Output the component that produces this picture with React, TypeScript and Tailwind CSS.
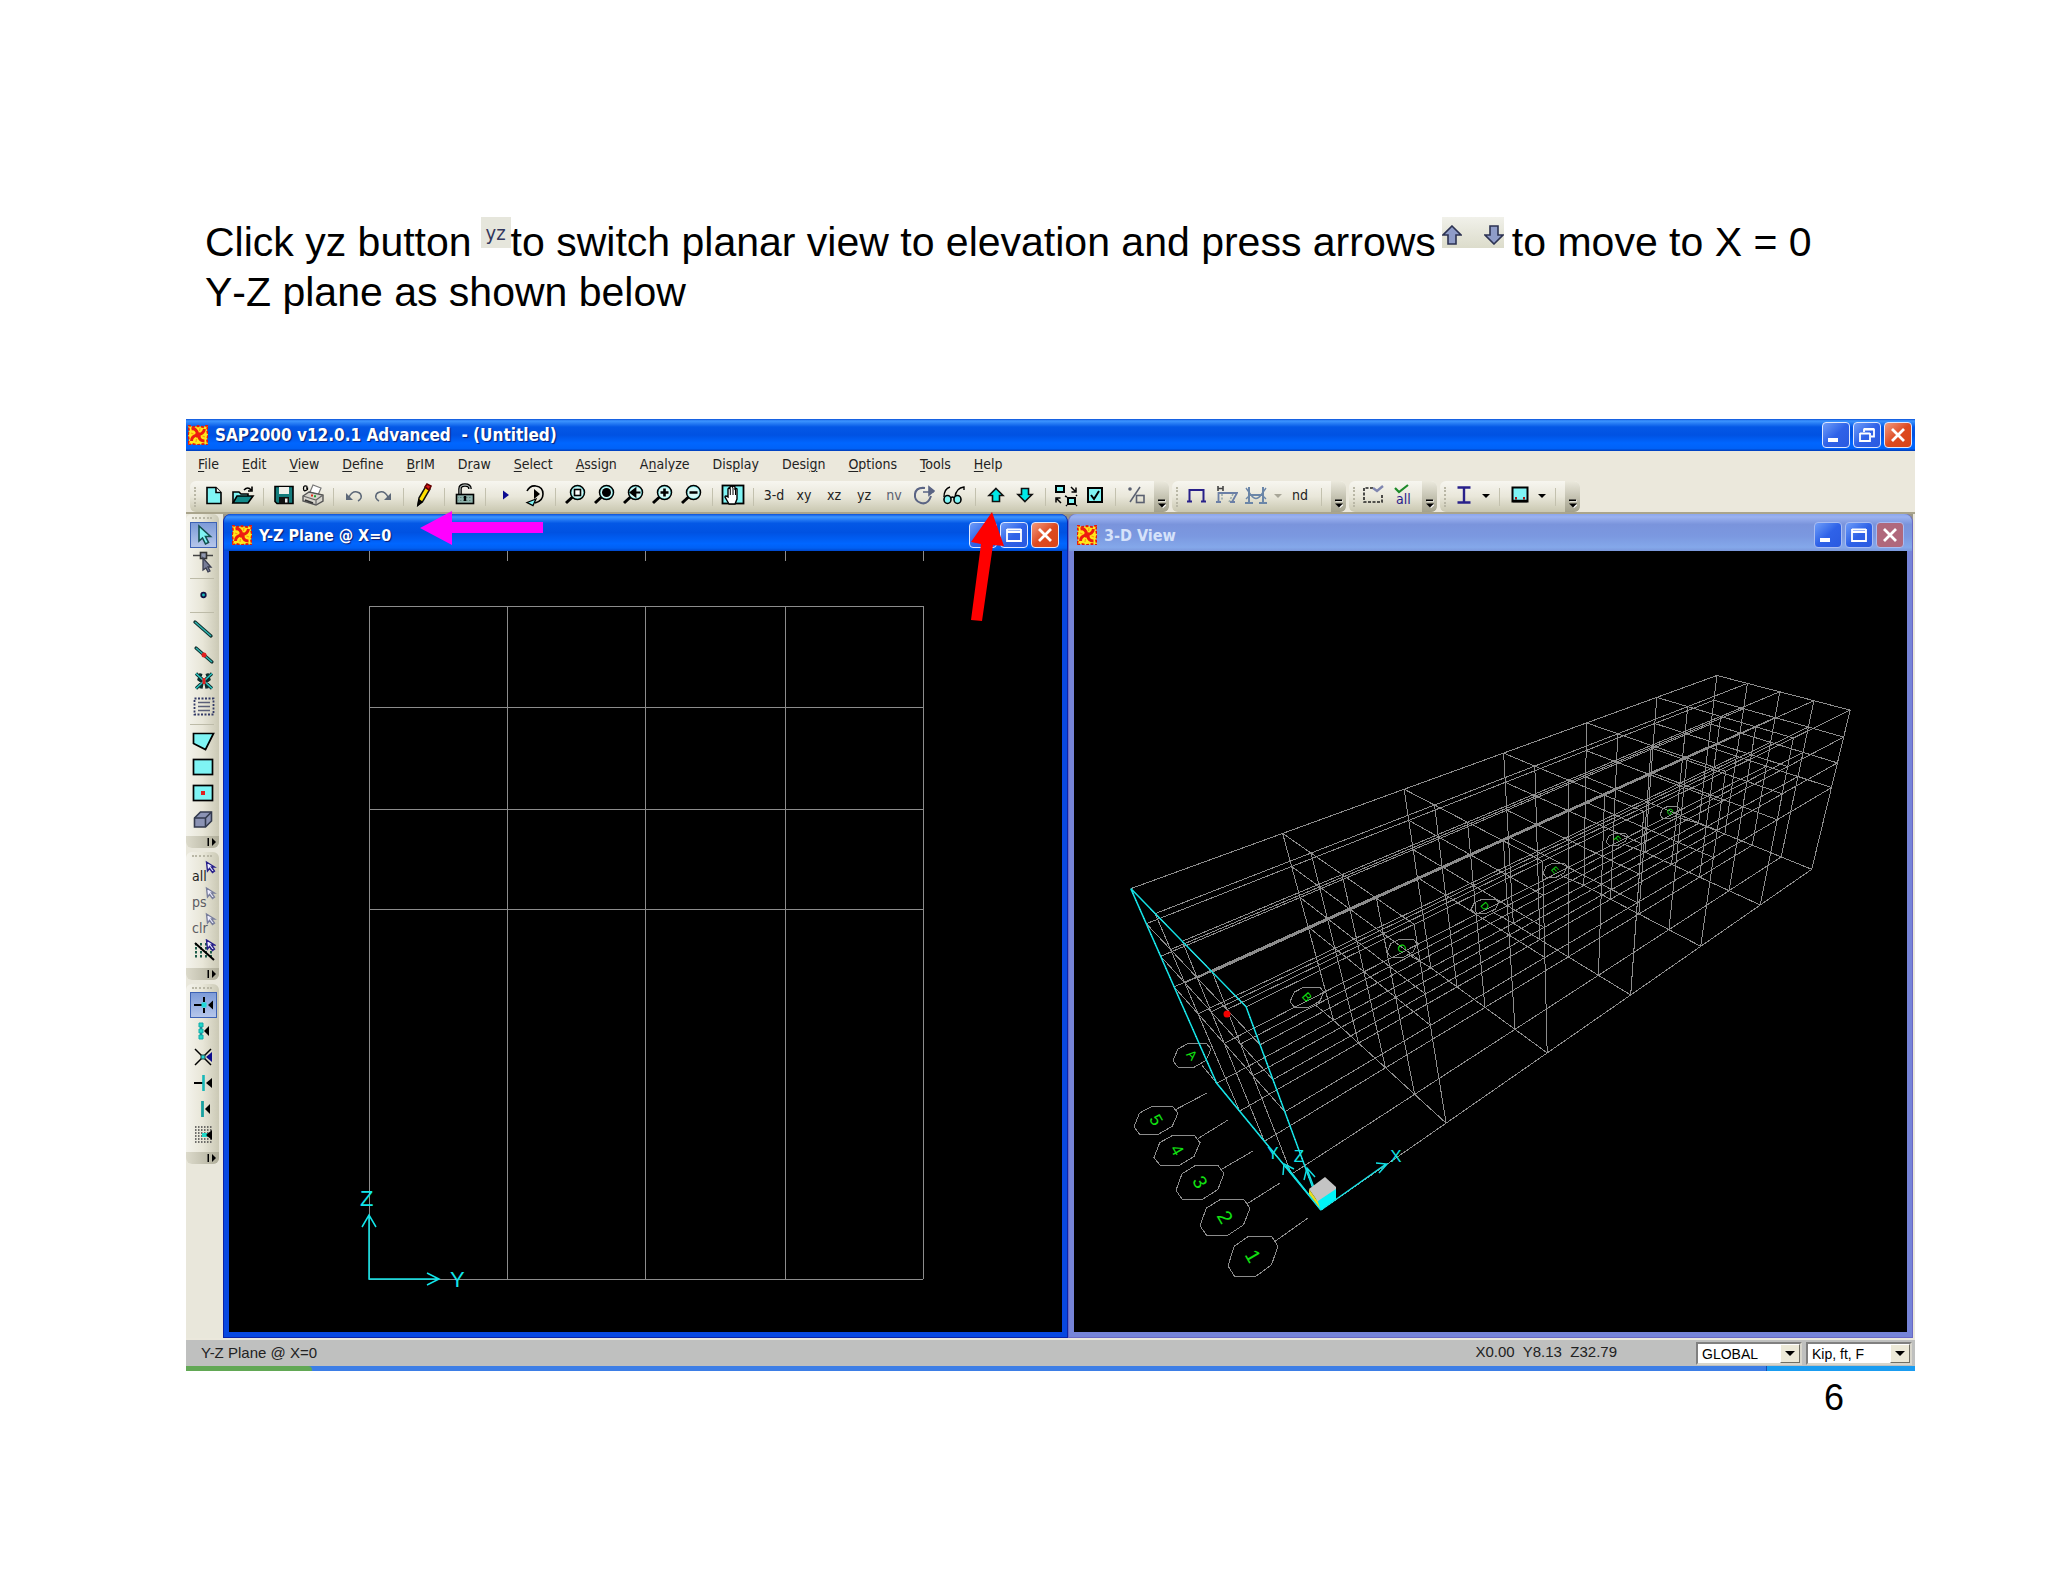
import type { ReactNode } from 'react';

const CYAN = '#7ff4f4';

// ---------- icons ----------

function Icon({ size = 'w-6 h-6', children }: { size?: string; children: ReactNode }) {
    return (
        <svg viewBox="0 0 24 24" className={`${size} shrink-0`} fill="none" stroke="#000" strokeWidth="1.6" aria-hidden="true">
            {children}
        </svg>
    );
}

function SapLogo() {
    return (
        <svg viewBox="0 0 20 20" className="w-5 h-5 shrink-0" aria-hidden="true">
            <path d="M0 0l5 2 5-1 5 1 5-2-1 5 1 5-1 5 1 5-5-1-5 1-5-1-5 1 1-5-1-5 1-5z" fill="#ffe81a" stroke="#e8180c" strokeWidth="1.800" strokeDasharray="3 1.500" />
            <path d="M3.500 4q5-1 6 5M16.500 4q-1 5-6 5.500M3.500 16q0-5 6-6M16.500 16q-5 0-6-5.500" fill="none" stroke="#ee1c10" strokeWidth="3" />
            <path d="M8 8l4 4M12 8l-4 4" stroke="#ee1c10" strokeWidth="2.800" />
            <path d="M3 8l2.500 1M8 17l.5-3M12 3l-.5 3M17 12l-2.500-1" stroke="#ff9a10" strokeWidth="1.200" />
        </svg>
    );
}

const NewFile = () => (
    <Icon>
        <path d="M5 4.500h9l5 5v11H5z" fill={CYAN} />
        <path d="M14 4.500v5h5" fill="#fff" />
    </Icon>
);

const OpenFile = () => (
    <Icon>
        <path d="M2 20V9h6l2 2h7v3" fill={CYAN} />
        <path d="M2 20l4-7h16l-5 7z" fill="#128a8a" />
        <path d="M13 7q4-4 7 0M21 3.500V8h-4" />
    </Icon>
);

const Save = () => (
    <Icon>
        <path d="M3 3.500h18v17H5l-2-2z" fill="#147c7c" />
        <rect x="7" y="4" width="10" height="7" fill="#f0f0ea" stroke="none" />
        <rect x="7" y="14" width="10" height="6.500" fill="#111" stroke="none" />
        <rect x="13" y="15.500" width="2.500" height="4" fill="#eee" stroke="none" />
    </Icon>
);

const Printer = () => (
    <Icon>
        <path d="M6.500 3.500q-4-2-4 2t4 1V5H5" strokeWidth="1.300" />
        <path d="M9 9l3-7 8 3-3 7z" fill="#fff" stroke="#777" strokeWidth="1.200" />
        <path d="M2 13l6-4 14 3v6l-7 4-13-4z" fill="#d6d4cc" stroke="#555" strokeWidth="1.400" />
        <path d="M2 13l13 4 7-5M15 17v5" stroke="#666" strokeWidth="1.200" />
        <path d="M4 17l8 3" stroke="#333" />
        <path d="M10 12.500h2" stroke="#e03020" strokeWidth="2" />
        <path d="M13 13.300h2" stroke="#20a030" strokeWidth="2" />
    </Icon>
);

const Undo = () => (
    <Icon>
        <path d="M7 14q3-6 8-5t4 6q-1 2-3 3" stroke="#5d6878" strokeWidth="1.500" />
        <path d="M4 10v7h7z" fill="#5d6878" stroke="none" />
    </Icon>
);

const Redo = () => (
    <Icon>
        <path d="M17 14q-3-6-8-5t-4 6q1 2 3 3" stroke="#5d6878" strokeWidth="1.500" />
        <path d="M20 10v7h-7z" fill="#5d6878" stroke="none" />
    </Icon>
);

const Pencil = () => (
    <Icon>
        <path d="M7 15L14 3l4 3-7 12-5 4z" fill="#ffe000" stroke="#111" strokeWidth="1.500" />
        <path d="M13 4l2-3 4 2-2 4z" fill="#e01818" stroke="#600" />
        <path d="M6 22l1-5 3 2z" fill="#111" />
    </Icon>
);

const Unlock = () => (
    <Icon>
        <path d="M7 11V6q0-4 5-4t5 4" strokeWidth="3.600" />
        <path d="M7 11V6q0-4 5-4t5 4" stroke="#dfe8e4" strokeWidth="1" />
        <rect x="3.500" y="11.500" width="17" height="9" fill="#8fb3ac" />
        <path d="M4 14.500h16M4 17.500h16" stroke="#5e807a" strokeDasharray="1.500 1.500" strokeWidth="1" />
        <path d="M12 13v5" strokeWidth="2.400" />
    </Icon>
);

const Play = () => (
    <Icon>
        <path d="M9 7.500v9l6-4.500z" fill="#0a0a90" stroke="none" />
    </Icon>
);

const RunAnimate = () => (
    <Icon>
        <path d="M4 8q3-6 9-5 7 1 7 8t-8 9" />
        <path d="M11 6v10l6-5z" fill="#000" stroke="none" />
        <path d="M13 16l-9 3.500 6 3z" fill={CYAN} strokeWidth="1.300" />
    </Icon>
);

function Magnifier({ children }: { children?: ReactNode }) {
    return (
        <Icon>
            <path d="M8.500 14l-6.500 6" strokeWidth="3" />
            <circle cx="13.500" cy="9.500" r="7" fill={CYAN} strokeWidth="1.500" />
            <circle cx="13.500" cy="9.500" r="5.600" fill="#d9f7f5" stroke="none" />
            {children}
        </Icon>
    );
}

const Hand = () => (
    <Icon>
        <rect x="1.500" y="2.500" width="21" height="18" fill={CYAN} strokeWidth="1.800" />
        <path d="M8 21l-4-7q0-2 3 0V6q1-2 2 0V4q1.500-2 2.500 0V4q1.500-2 2.500 0v2q1.500-1 2 0v10l-2 5z" fill="#fff" strokeWidth="1.400" />
        <path d="M9.300 6v6M12 5v7M14.500 6v6" strokeWidth="1" />
    </Icon>
);

const RotateView = () => (
    <Icon>
        <path d="M13 5q-9-1-10 6t6 9 10-7" stroke="#5a6484" strokeWidth="2" />
        <path d="M11 9h11M17 4v8l5-4z" fill="#5a6484" stroke="#5a6484" />
    </Icon>
);

const Glasses = () => (
    <Icon>
        <path d="M2 14q0-8 6-10M13 14q1-9 9-10v3" strokeWidth="1.400" />
        <ellipse cx="5.500" cy="16.500" rx="3.500" ry="4" fill={CYAN} />
        <ellipse cx="15.500" cy="16.500" rx="3.500" ry="4" fill={CYAN} />
        <path d="M9 15q1.500-2 3 0" />
    </Icon>
);

const ArrowUp = () => (
    <Icon>
        <path d="M12 5.500l7 7h-3.500v6h-7v-6H5z" fill="#00e8e8" stroke="#111" />
    </Icon>
);

const ArrowDown = () => (
    <Icon>
        <path d="M12 18.500l7-7h-3.500v-6h-7v6H5z" fill="#00e8e8" stroke="#111" />
    </Icon>
);

const ShrinkObjects = () => (
    <Icon>
        <rect x="2" y="3" width="8" height="6" fill={CYAN} strokeWidth="2" />
        <rect x="14" y="15" width="7" height="6" fill={CYAN} strokeWidth="2" />
        <path d="M17 4l4 4M22 4.500V9h-4.500M7 20l-4-4M2 19.500V15h4.500M11 13l2 1M22 13l1-1M12 23l1-1M22 22l1 1" strokeWidth="1.500" />
    </Icon>
);

const CheckOption = () => (
    <Icon>
        <rect x="5" y="5" width="14" height="14" fill={CYAN} strokeWidth="2" />
        <path d="M8 12l3 4 5-8" strokeWidth="2" />
    </Icon>
);

const AssignSlash = () => (
    <Icon>
        <path d="M6 19L16 4" stroke="#5a6070" strokeWidth="1.500" />
        <circle cx="6" cy="6" r="1.800" fill="#5a6070" stroke="none" />
        <rect x="12.500" y="12.500" width="7.500" height="7" stroke="#5a6070" />
    </Icon>
);

const Frame = () => (
    <Icon>
        <path d="M5.500 18.500V7h14v11.500M3 18.500h5M17 18.500h5" stroke="#28208a" strokeWidth="2" />
    </Icon>
);

const FrameDim = () => (
    <Icon>
        <path d="M4 3v5M9 3v5M4 5.500h5" stroke="#444" />
        <path d="M4.500 19V10H23L18 19M2 19h5M16 19h5" stroke="#6b7fa6" strokeWidth="1.800" />
        <path d="M8 11v7M19 11l-4 8" stroke="#9aa" strokeDasharray="2 1.500" />
    </Icon>
);

const FrameMoment = () => (
    <Icon>
        <path d="M5 20V4M19 20V4M4 12h16M1 20h8M15 20h8" stroke="#6b86a8" strokeWidth="2" />
        <path d="M2 5l5 7q5 7 10 0l5-7M2 16l5-5M22 16l-5-5" stroke="#6b86a8" strokeWidth="1.400" />
    </Icon>
);

const SelectDashed = () => (
    <Icon>
        <path d="M12 5H3v14h18V11" stroke="#222" strokeDasharray="3 1.500" strokeWidth="1.600" />
        <path d="M12 5l4 3 6-5" stroke="#7f86b0" strokeWidth="2.400" />
    </Icon>
);

const Section = () => (
    <Icon>
        <path d="M5.500 4.500h13M5.500 19.500h13M12 4.500v15" stroke="#28208a" strokeWidth="2.400" />
    </Icon>
);

const Slab = () => (
    <Icon>
        <rect x="4.500" y="4.500" width="15" height="14" fill={CYAN} strokeWidth="2" />
        <path d="M8 14v2.500M16 14v2.500" stroke="#a01818" strokeWidth="2" />
        <path d="M5 18h14" strokeWidth="2.500" />
    </Icon>
);

function Caret({ dim }: { dim?: boolean }) {
    return (
        <button aria-label="More" className="w-[14px] h-full pb-[2px] flex items-center justify-center">
            <svg viewBox="0 0 8 4" className="w-2 h-1">
                <path d="M0 0h8L4 4z" fill={dim ? '#a8a698' : '#000'} />
            </svg>
        </button>
    );
}

// ---------- toolbar ----------

function Tool({ label, wide, dim, children }: { label: string; wide?: boolean; dim?: boolean; children: ReactNode }) {
    return (
        <button
            aria-label={label}
            className={`${wide ? 'w-[30px]' : 'w-[29px]'} ${dim ? 'text-[#5b6070]' : 'text-[#222]'} h-full pb-[3px] flex items-center justify-center text-[14px] leading-5`}
        >
            {children}
        </button>
    );
}

const Sep = () => (
    <div className="w-3 flex justify-center items-center">
        <div className="w-px h-[18px] bg-[#c3c1ae]" />
    </div>
);

function ToolGroup({ name, children }: { name: string; children: ReactNode }) {
    return (
        <div role="toolbar" aria-label={name} className="flex h-[31px] rounded-md overflow-hidden bg-gradient-to-b from-[#f7f6f0] via-[#e9e7da] to-[#c9c7b0]">
            <div className="w-[9px] flex items-center justify-center">
                <div className="h-5 border-l-2 border-dotted border-[#b9b7a6]" />
            </div>
            {children}
            <button aria-label="Toolbar options" className="w-[15px] ml-1 flex items-end justify-center pb-1 bg-gradient-to-b from-[#ebe9dd] to-[#a3a18c]">
                <svg viewBox="0 0 8 9" className="w-2 h-[9px]">
                    <path d="M1 1.500h7v1H1zM1 5.500h8L5 9z" fill="#fff" />
                    <path d="M0 0.500h7v1.500H0zM0 4.500h8L4 8.500z" fill="#000" />
                </svg>
            </button>
        </div>
    );
}

// ---------- side dock ----------

function DockButton({ label, active, children }: { label: string; active?: boolean; children: ReactNode }) {
    return (
        <button
            aria-label={label}
            className={`w-[27px] h-[26px] flex items-center justify-center border ${active ? 'border-[#3d62b4] bg-gradient-to-b from-[#7d9bd8] to-[#b5c6ea]' : 'border-transparent'}`}
        >
            {children}
        </button>
    );
}

const DockSep = () => <div className="h-2 w-6 flex items-center"><div className="h-px w-full bg-[#bdbba8]" /></div>;

function DockGroup({ name, children }: { name: string; children: ReactNode }) {
    return (
        <div role="toolbar" aria-label={name} aria-orientation="vertical" className="mb-1 rounded-md overflow-hidden bg-gradient-to-r from-[#f4f3ec] via-[#e8e6d8] to-[#cbc9b5]">
            <div className="h-2 flex items-center pl-[6px]">
                <div className="w-5 border-t-2 border-dotted border-[#b9b7a6]" />
            </div>
            <div className="pl-1 flex flex-col items-start">{children}</div>
            <button aria-label="Toolbar options" className="mt-1 h-3 w-full flex items-center justify-end pr-[2px] bg-gradient-to-r from-[#dcdacb] to-[#b0ae9a]">
                <svg viewBox="0 0 10 8" className="w-[10px] h-2">
                    <path d="M0.500 0H2v8H0.500zM5 0v8l4-4z" fill="#000" />
                </svg>
            </button>
        </div>
    );
}

const SelectArrow = ({ color = '#28208a' }: { color?: string }) => (
    <path d="M14.500 1l1 9 2-2.500 3 4 2-1.500-3-4h3z" fill="#eef" stroke={color} strokeWidth="1.400" />
);

function SelectText({ text, color, arrow }: { text: string; color: string; arrow: string }) {
    return (
        <svg viewBox="0 0 24 24" className="w-6 h-6 overflow-visible">
            <text x="0" y="20" fontSize="14" fill={color}>{text}</text>
            <g fill="none"><SelectArrow color={arrow} /></g>
        </svg>
    );
}

const SideDock = () => (
    <div className="w-[37px] shrink-0 bg-[#e9e7db] pr-1">
        <DockGroup name="Draw">
            <DockButton label="Set select mode" active>
                <Icon><path d="M7 3v15l3.500-3 3 6 3-1.500-3-6h5z" fill={CYAN} stroke="#14504f" /></Icon>
            </DockButton>
            <DockButton label="Reshape">
                <Icon><path d="M1 6.500h20" stroke="#444" /><rect x="8.500" y="3.500" width="6" height="6" fill="#9098b0" stroke="#333" /><path d="M11 9v12l3-2 2 4 2-1-2-4h3z" fill="#777d98" stroke="#3a3e50" strokeWidth="1.300" /></Icon>
            </DockButton>
            <DockSep />
            <DockButton label="Draw joint">
                <Icon><circle cx="11.500" cy="12" r="2.300" fill="#18b8b8" stroke="#114" strokeWidth="1.700" /></Icon>
            </DockButton>
            <DockSep />
            <DockButton label="Draw frame">
                <Icon><path d="M3 5l16 14" strokeWidth="3.400" stroke="#12302f" strokeLinecap="round" /><path d="M3 5l16 14" strokeWidth="1.400" stroke="#2bb5b0" /></Icon>
            </DockButton>
            <DockButton label="Quick draw frame">
                <Icon><path d="M4 5l16 14" strokeWidth="3.200" stroke="#12302f" strokeLinecap="round" /><path d="M4 5l16 14" strokeWidth="1.400" stroke="#2bb5b0" /><circle cx="12" cy="12" r="2.500" fill="#e02020" stroke="none" /></Icon>
            </DockButton>
            <DockButton label="Quick draw braces">
                <Icon><path d="M4 4.500l16 15M20 4.500l-16 15M9 4.500l-2 6 4 3M15 4.500l2 6-4 3M9 19.500l1-5M15 19.500l-1-5" strokeWidth="3.200" stroke="#0f2c2b" /><path d="M4 4.500l16 15M20 4.500l-16 15" stroke="#2bc5c0" strokeWidth="1.600" /><path d="M12 9v6" stroke="#e02020" strokeWidth="3" /></Icon>
            </DockButton>
            <DockButton label="Quick draw secondary beams">
                <Icon><rect x="2.500" y="3.500" width="19" height="16" stroke="#333a66" strokeDasharray="2 1.500" strokeWidth="1.800" /><path d="M6 7.500h12M6 11.500h12M6 15.500h12" stroke="#5a5f78" /></Icon>
            </DockButton>
            <DockSep />
            <DockButton label="Draw poly area">
                <Icon><path d="M1.500 4.500h20l-8 16-12-6z" fill={CYAN} strokeWidth="1.700" /></Icon>
            </DockButton>
            <DockButton label="Draw rectangular area">
                <Icon><rect x="1.500" y="4.500" width="19" height="15" fill={CYAN} strokeWidth="1.700" /></Icon>
            </DockButton>
            <DockButton label="Quick draw area">
                <Icon><rect x="1.500" y="4.500" width="19" height="15" fill={CYAN} strokeWidth="1.700" /><rect x="9" y="10" width="4" height="4" fill="#e02020" stroke="none" /></Icon>
            </DockButton>
            <DockButton label="Draw solid">
                <Icon><path d="M2.500 11l6-6h11v9l-6 6h-11z" fill="#8b93b4" stroke="#333a4e" /><path d="M2.500 11h11v9M13.500 11l6-6" stroke="#333a4e" /></Icon>
            </DockButton>
        </DockGroup>
        <DockGroup name="Select">
            <DockButton label="Select all"><SelectText text="all" color="#222" arrow="#28208a" /></DockButton>
            <DockButton label="Restore previous selection"><SelectText text="ps" color="#5c5c62" arrow="#7a7f9c" /></DockButton>
            <DockButton label="Clear selection"><SelectText text="clr" color="#5c5c62" arrow="#7a7f9c" /></DockButton>
            <DockButton label="Select using intersecting line">
                <Icon><path d="M4 4v16M9 4v16M14 4v16M19 4v16" stroke="#1d5c4a" strokeDasharray="2.500 1.500" strokeWidth="2" /><path d="M3 4l19 17" strokeWidth="2" /><SelectArrow /></Icon>
            </DockButton>
        </DockGroup>
        <DockGroup name="Snap">
            <DockButton label="Snap to points" active>
                <Icon><path d="M2 12h8M12 4v5M12 15v5" strokeWidth="2" /><rect x="9.500" y="9.500" width="5" height="5" fill="#20d8d8" stroke="none" /><path d="M21 7.500v9L16 12z" fill="#000" stroke="none" /></Icon>
            </DockButton>
            <DockButton label="Snap to ends and midpoints">
                <Icon><path d="M9 4v16" stroke="#147" /><path d="M7 4h4v4H7zM7 10h4v4H7zM7 16h4v4H7z" fill="#20d8c8" stroke="#1aa" strokeWidth="1" /><path d="M17 7v10l-5-5z" fill="#000" stroke="none" /></Icon>
            </DockButton>
            <DockButton label="Snap to intersections">
                <Icon><path d="M3 4l16 16M19 4L3 20" strokeWidth="1.500" /><rect x="9" y="10" width="4" height="4" fill="#20d8d8" stroke="#244" strokeWidth="1" /><path d="M20 7v10l-6-5z" fill="#0c0c8c" stroke="none" /></Icon>
            </DockButton>
            <DockButton label="Snap to perpendicular">
                <Icon><path d="M2 12h9" strokeWidth="2" /><path d="M11.500 4v16" stroke="#18b8b8" strokeWidth="2.600" /><path d="M20 7v10l-6-5z" fill="#000" stroke="none" /></Icon>
            </DockButton>
            <DockButton label="Snap to lines and edges">
                <Icon><path d="M10.500 4v16" stroke="#18a0a0" strokeWidth="2.800" /><path d="M18 7v10l-5-5z" fill="#000" stroke="none" /></Icon>
            </DockButton>
            <DockButton label="Snap to fine grid">
                <Icon><path d="M3 4h18M3 7h18M3 10h18M3 13h18M3 16h18M3 19h18" stroke="#444" strokeDasharray="1.500 1.500" strokeWidth="1.500" /><rect x="10" y="10" width="5" height="4" fill="#20d8c8" stroke="none" /><path d="M20 7v10l-6-5z" fill="#000" stroke="none" /></Icon>
            </DockButton>
        </DockGroup>
    </div>
);

// ---------- title bar buttons ----------

function CaptionButton({ kind, inactive }: { kind: 'min' | 'max' | 'restore' | 'close'; inactive?: boolean }) {
    const blue = 'bg-gradient-to-br from-[#6f9cf8] via-[#2f62e8] to-[#2a5ae0]';
    const red = inactive ? 'bg-[#b0687c]' : 'bg-gradient-to-br from-[#f0987c] via-[#dd4a20] to-[#d84418]';
    return (
        <button
            aria-label={kind}
            className={`w-7 h-[26px] rounded border ${inactive ? 'border-[#a9bdf2]' : 'border-[#dfe8ff]'} ${kind === 'close' ? red : blue}`}
        >
            <svg viewBox="0 0 26 24" className="w-full h-full" fill="none" stroke="#fff">
                {kind === 'min' && <path d="M5 17h10" strokeWidth="4" />}
                {kind === 'max' && <path d="M6 6.500h14M6 6v12h14V6M6 9h14" strokeWidth="1.800" />}
                {kind === 'restore' && <path d="M6 10.500h10M6 10v8h10v-8M10 9V6.500h10v7h-3M10 6h10" strokeWidth="1.800" />}
                {kind === 'close' && <path d="M7 6l12 12M19 6L7 18" strokeWidth="2.800" />}
            </svg>
        </button>
    );
}

function ViewWindow({ title, inactive, children }: { title: string; inactive?: boolean; children: ReactNode }) {
    return (
        <section
            aria-label={title}
            className={`relative flex-1 min-w-0 rounded-t-lg px-[5px] pb-[5px] border-b border-x ${inactive ? 'bg-[#7684d8] border-[#6a68c4]' : 'bg-[#0848e0] border-[#0a22a8]'}`}
        >
            <div
                className={`-mx-[5px] h-[37px] pt-1 pl-[8px] pr-2 rounded-t-lg flex items-center ${inactive
                    ? 'bg-[linear-gradient(#8ba6ee,#9bb2f0_8%,#7a94dc_28%,#7b98e0_60%,#84a8ea_90%,#7b98dc)] text-[#d6e2fa]'
                    : 'bg-[linear-gradient(#0a50d8,#3d95ff_8%,#0458e6_25%,#0052e2_50%,#0066ff_80%,#0060f4_92%,#0048cc)] text-white [text-shadow:1px_1px_1px_#0a1a70]'}`}
            >
                <SapLogo />
                <h2 className="ml-[7px] pt-[2px] flex-1 text-[16px] leading-5 font-bold whitespace-pre">{title}</h2>
                <div className="flex gap-[3px]">
                    <CaptionButton kind="min" inactive={inactive} />
                    <CaptionButton kind="max" inactive={inactive} />
                    <CaptionButton kind="close" inactive={inactive} />
                </div>
            </div>
            {children}
        </section>
    );
}

// ---------- drawings ----------

const GRID_Y = [140, 278, 416, 556, 694];
const GRID_Z = [55, 156, 258, 358, 728];

function PlaneView() {
    return (
        <svg viewBox="0 0 833 781" className="block w-full bg-black" role="img" aria-label="Y-Z grid">
            <g stroke="#8c8c8c" shapeRendering="crispEdges">
                {GRID_Y.map(x => <path key={x} d={`M${x} 0V10M${x} 55V728`} />)}
                {GRID_Z.map(y => <path key={y} d={`M140 ${y}H694`} />)}
            </g>
            <g stroke="#12e6ea" strokeWidth="1.500" fill="none">
                <path d="M140 665V728H210M133 676l7-12 7 12M198 722l12 6-12 6" />
            </g>
            <g fill="#12e6ea" fontSize="22" className="font-['Liberation_Sans',Arial,sans-serif]">
                <text x="131" y="655">Z</text>
                <text x="221" y="736">Y</text>
            </g>
        </svg>
    );
}

const XS = [0, 1 / 6, 2 / 6, 3 / 6, 4 / 6, 5 / 6, 1];
const YS = [0, 0.25, 0.5, 0.75, 1];
const ZS = [0, 0.55, 0.7, 0.85, 1];

// perspective projection of the unit box onto the 3-D view
function project(x: number, y: number, z: number) {
    const w = 1 + 0.711 * x + 0.185 * y - 0.233 * z;
    const u = (247 + 1015.2 * x - 77.9 * y - 115 * z) / w;
    const v = (659 - 114.4 * x - 28.2 * y - 309.4 * z) / w;
    return `${u.toFixed(1)} ${v.toFixed(1)}`;
}

function latticePath() {
    let d = '';
    for (const y of YS) for (const z of ZS) d += `M${project(0, y, z)}L${project(1, y, z)}`;
    for (const x of XS) for (const z of ZS) d += `M${project(x, 0, z)}L${project(x, 1, z)}`;
    for (const x of XS) for (const y of YS) d += `M${project(x, y, 0)}L${project(x, y, 1)}`;
    return d;
}

const BUBBLES = [
    { t: '1', cx: 179, cy: 705, rx: 25, ry: 20, size: 20, to: [234, 667] },
    { t: '2', cx: 151, cy: 666, rx: 25, ry: 18, size: 20, to: [206, 632] },
    { t: '3', cx: 126, cy: 631, rx: 24, ry: 17, size: 19, to: [179, 600] },
    { t: '4', cx: 103, cy: 599, rx: 23, ry: 15, size: 17, to: [154, 569] },
    { t: '5', cx: 82, cy: 569, rx: 22, ry: 14, size: 17, to: [133, 542] },
];

const LETTERS = [
    { t: 'A', cx: 118, cy: 504, rx: 19, ry: 12, size: 13 },
    { t: 'B', cx: 233, cy: 446, rx: 17, ry: 10, size: 12 },
    { t: 'C', cx: 328, cy: 397, rx: 15, ry: 9, size: 11 },
    { t: 'D', cx: 411, cy: 355, rx: 14, ry: 7, size: 10 },
    { t: 'E', cx: 481, cy: 319, rx: 12, ry: 7, size: 9 },
    { t: 'F', cx: 543, cy: 288, rx: 11, ry: 6, size: 9 },
    { t: 'G', cx: 596, cy: 261, rx: 10, ry: 6, size: 8 },
];

const OCTAGON = [[-0.16, -1], [0.74, -1], [1, -0.49], [0.74, 0.44], [0.13, 1], [-0.75, 1], [-1, 0.49], [-0.75, -0.49]];

function octagon(cx: number, cy: number, rx: number, ry: number) {
    return OCTAGON.map(([x, y]) => `${(cx + x * rx).toFixed(1)},${(cy + y * ry).toFixed(1)}`).join(' ');
}

function SpaceView() {
    return (
        <svg viewBox="0 0 833 781" className="block w-full bg-black" role="img" aria-label="3-D grid">
            <g stroke="#8c8c8c" fill="none" shapeRendering="crispEdges">
                <path d={latticePath()} />
                {BUBBLES.map(b => (
                    <g key={b.t}>
                        <polygon points={octagon(b.cx, b.cy, b.rx, b.ry)} />
                        <path d={`M${b.cx + b.rx * 0.9} ${b.cy - b.ry * 0.75}L${b.to[0]} ${b.to[1]}`} />
                    </g>
                ))}
                {LETTERS.map((b, i) => (
                    <g key={b.t}>
                        <polygon points={octagon(b.cx, b.cy, b.rx, b.ry)} />
                        <path d={`M${b.cx + b.rx * 0.5} ${b.cy + b.ry * 0.8}L${project(i / 6, 1, 0)}`} />
                    </g>
                ))}
            </g>
            <g fill="#12e012" textAnchor="middle" className="font-['Liberation_Sans',Arial,sans-serif]">
                {BUBBLES.map(b => (
                    <text key={b.t} x={b.cx} y={b.cy} fontSize={b.size} dominantBaseline="central" transform={`rotate(60 ${b.cx} ${b.cy})`}>{b.t}</text>
                ))}
                {LETTERS.map(b => (
                    <text key={b.t} x={b.cx} y={b.cy} fontSize={b.size} dominantBaseline="central" transform={`rotate(48 ${b.cx} ${b.cy})`}>{b.t}</text>
                ))}
            </g>
            <g stroke="#12e0e4" fill="none" strokeWidth="1.500">
                <path d={`M${project(0, 0, 0)}L${project(0, 1, 0)}L${project(0, 1, 1)}L${project(0, 0, 1)}Z`} />
                <path d="M247 659L312 613M302 612l11 1-8 9" />
                <path d="M247 659L212 615M209 624l1-11 10 5M242 642L233 618M230 629l3-12 8 9" />
            </g>
            <g fill="#12e0e4" fontSize="17" textAnchor="middle" className="font-['Liberation_Sans',Arial,sans-serif]">
                <text x="322" y="611">X</text>
                <text x="199" y="608">Y</text>
                <text x="225" y="611">Z</text>
            </g>
            <path d="M235 638l16-12 11 10v3l-18 12z" fill="#c4c4c4" />
            <path d="M244 650l18-12v10l-15 11z" fill="#00f4f8" />
            <path d="M235 638l9 13 2 6-11-14z" fill="#e8e020" />
            <circle cx="153" cy="463" r="3.500" fill="#f40000" />
        </svg>
    );
}

// ---------- page ----------

// the number is the position of the underlined letter
const MENU: [string, number][] = [
    ['File', 0], ['Edit', 0], ['View', 0], ['Define', 0], ['BrIM', 0], ['Draw', 1], ['Select', 0],
    ['Assign', 0], ['Analyze', 1], ['Display', 3], ['Design', 4], ['Options', 0], ['Tools', 0], ['Help', 0],
];

function StatusSelect({ label, value, options }: { label: string; value: string; options: string[] }) {
    return (
        <div className="relative w-[106px] h-[23px]">
            <select
                aria-label={label}
                defaultValue={value}
                className="appearance-none w-full h-full pl-1 bg-white text-black text-[14px] leading-[18px] border-2 border-[#808080] border-r-[#d8d6cc] border-b-[#d8d6cc]"
            >
                {options.map(o => <option key={o}>{o}</option>)}
            </select>
            <span className="absolute right-[2px] inset-y-[2px] w-5 pointer-events-none flex items-center justify-center bg-[#ece9d8] border border-[#fff] border-r-[#716f64] border-b-[#716f64]">
                <svg viewBox="0 0 10 5" className="w-[10px] h-[5px]"><path d="M0 0h10L5 5z" /></svg>
            </span>
        </div>
    );
}

export default function App() {
    return (
        <main className="min-h-screen bg-white text-black font-['Liberation_Sans',Arial,sans-serif] pt-[217px] pb-16">
            <p className="pl-[205px] pr-16 text-[41px] leading-[50px] [font-kerning:none]">
                Click yz button
                <span className="inline-flex align-top items-center justify-center w-[30px] h-[31px] ml-[9px] bg-[#e6e6dc] text-[20px] leading-5 text-[#33375c] font-['DejaVu_Sans_Condensed','DejaVu_Sans',sans-serif]">yz</span>
                to switch planar view to elevation and press arrows
                <span className="inline-flex align-top items-center justify-between w-[62px] h-[31px] ml-[6px] mr-2 pt-1 bg-gradient-to-b from-[#f1f1ea] to-[#dcdccb]">
                    <svg viewBox="0 0 20 20" className="w-5 h-5" fill="#8f9cc8" stroke="#2c3252" strokeWidth="1.600" aria-hidden="true">
                        <path d="M10 1l9 9h-5v9H6v-9H1z" />
                    </svg>
                    <svg viewBox="0 0 20 20" className="w-5 h-5" fill="#8f9cc8" stroke="#2c3252" strokeWidth="1.600" aria-hidden="true">
                        <path d="M10 19l9-9h-5V1H6v9H1z" />
                    </svg>
                </span>
                to move to X = 0
                <br />
                Y-Z plane as shown below
            </p>

            <div className="mt-[102px] ml-[186px] mr-[133px] bg-[#ebe8dc] font-['DejaVu_Sans_Condensed','DejaVu_Sans',sans-serif]">
                <header className="h-8 pl-[2px] pr-[3px] flex items-center text-white bg-[linear-gradient(#0a50d8,#3d95ff_6%,#0458e6_25%,#0052e2_50%,#0066ff_75%,#0062f8_92%,#003cb8)]">
                    <SapLogo />
                    <h1 className="ml-[7px] flex-1 text-[17px] leading-5 font-bold whitespace-pre [text-shadow:1px_1px_1px_#0a1a70]">SAP2000 v12.0.1 Advanced  - (Untitled)</h1>
                    <div className="flex gap-[3px]">
                        <CaptionButton kind="min" />
                        <CaptionButton kind="restore" />
                        <CaptionButton kind="close" />
                    </div>
                </header>

                <nav aria-label="Main menu" className="h-[30px] pb-1 flex items-center text-[14px] leading-5 text-[#222]">
                    {MENU.map(([name, i]) => (
                        <button key={name} className="pl-3 pr-[11px] whitespace-nowrap">
                            {name.slice(0, i)}<span className="underline underline-offset-2">{name[i]}</span>{name.slice(i + 1)}
                        </button>
                    ))}
                </nav>

                <div className="h-[33px] pl-1 flex gap-[3px] border-b-2 border-[#a9a48c]">
                    <ToolGroup name="Standard">
                        <Tool label="New model"><NewFile /></Tool>
                        <Tool label="Open"><OpenFile /></Tool>
                        <Sep />
                        <Tool label="Save"><Save /></Tool>
                        <Tool label="Print graphics"><Printer /></Tool>
                        <Sep />
                        <Tool label="Undo"><Undo /></Tool>
                        <Tool label="Redo"><Redo /></Tool>
                        <Sep />
                        <Tool label="Refresh"><Pencil /></Tool>
                        <Sep />
                        <Tool label="Lock model"><Unlock /></Tool>
                        <Sep />
                        <Tool label="Run analysis"><Play /></Tool>
                        <Tool label="Run animation"><RunAnimate /></Tool>
                        <Sep />
                        <Tool label="Rubber band zoom"><Magnifier><rect x="10.500" y="6.500" width="6" height="6" fill="#fff" /></Magnifier></Tool>
                        <Tool label="Full view"><Magnifier><circle cx="13.500" cy="9.500" r="4.500" fill="#000" stroke="none" /></Magnifier></Tool>
                        <Tool label="Previous zoom"><Magnifier><path d="M9.500 9.500h9M13.500 5.500v8l-5-4z" fill="#000" strokeWidth="1.800" /></Magnifier></Tool>
                        <Tool label="Zoom in"><Magnifier><path d="M9.500 9.500h8M13.500 5.500v8" strokeWidth="2.600" /></Magnifier></Tool>
                        <Tool label="Zoom out"><Magnifier><path d="M9.500 9.500h8" strokeWidth="2.600" /></Magnifier></Tool>
                        <Sep />
                        <Tool label="Pan"><Hand /></Tool>
                        <Sep />
                        <Tool label="3-d view" wide>3-d</Tool>
                        <Tool label="xy view" wide>xy</Tool>
                        <Tool label="xz view" wide>xz</Tool>
                        <Tool label="yz view" wide>yz</Tool>
                        <Tool label="Named view" wide dim>nv</Tool>
                        <Tool label="Rotate view" wide><RotateView /></Tool>
                        <Tool label="Perspective" wide><Glasses /></Tool>
                        <Sep />
                        <Tool label="Move up"><ArrowUp /></Tool>
                        <Tool label="Move down"><ArrowDown /></Tool>
                        <Sep />
                        <Tool label="Shrink objects"><ShrinkObjects /></Tool>
                        <Tool label="Display options"><CheckOption /></Tool>
                        <Sep />
                        <Tool label="Assign to group"><AssignSlash /></Tool>
                    </ToolGroup>
                    <ToolGroup name="Display">
                        <Tool label="Undeformed shape" wide><Frame /></Tool>
                        <Tool label="Deformed shape" wide><FrameDim /></Tool>
                        <Tool label="Forces" wide><FrameMoment /></Tool>
                        <Caret dim />
                        <Tool label="Named display" wide>nd</Tool>
                        <Sep />
                    </ToolGroup>
                    <ToolGroup name="Selection">
                        <Tool label="Deselect" wide><SelectDashed /></Tool>
                        <Tool label="Select all" wide>
                            <svg viewBox="0 0 24 24" className="w-6 h-6 overflow-visible">
                                <text x="5" y="21" fontSize="14" fill="#28208a">all</text>
                                <path d="M4 5l4 4 9-7" fill="none" stroke="#1d8a2a" strokeWidth="2.200" />
                            </svg>
                        </Tool>
                    </ToolGroup>
                    <ToolGroup name="Design">
                        <Tool label="Steel design" wide><Section /></Tool>
                        <Caret />
                        <Sep />
                        <Tool label="Concrete design" wide><Slab /></Tool>
                        <Caret />
                        <Sep />
                    </ToolGroup>
                </div>

                <div className="flex pr-[2px] pb-[2px]">
                    <SideDock />
                    <div className="relative flex-1 flex min-w-0 bg-[#9a9788]">
                        <ViewWindow title="Y-Z Plane @ X=0">
                            <PlaneView />
                            {/* callout arrows over the title bar */}
                            <svg viewBox="0 0 123 34" className="absolute left-[196px] -top-[3px] w-[123px] h-[34px]" aria-hidden="true">
                                <path d="M0 17L32 0v11h91v11H32v12z" fill="#ff00ff" />
                            </svg>
                            <svg viewBox="0 0 34 110" className="absolute right-[62px] -top-[2px] w-[34px] h-[110px]" aria-hidden="true">
                                <path d="M21 0L33 34l-11-1-11 76-11-1L10 32 0 30z" fill="#ff0000" />
                            </svg>
                        </ViewWindow>
                        <ViewWindow title="3-D View" inactive>
                            <SpaceView />
                        </ViewWindow>
                    </div>
                </div>

                <footer className="h-[26px] pl-[15px] pr-[3px] flex items-center gap-1 bg-[#bfc0bf] text-[#222] font-['Liberation_Sans',Arial,sans-serif]">
                    <span className="flex-1 text-[15px] leading-5">Y-Z Plane @ X=0</span>
                    <span className="mr-[75px] pb-[2px] text-[15px] leading-5 whitespace-pre">X0.00  Y8.13  Z32.79</span>
                    <StatusSelect label="Coordinate system" value="GLOBAL" options={['GLOBAL']} />
                    <StatusSelect label="Units" value="Kip, ft, F" options={['Kip, ft, F', 'Kip, in, F', 'KN, m, C']} />
                </footer>
                <div className="h-[5px] flex bg-[#3d7ee6]">
                    <div className="w-[126px] rounded-tr bg-[#62a855]" />
                    <div className="ml-auto w-[149px] border-l border-[#1450b0] bg-[#1a9cf0]" />
                </div>
            </div>

            <p className="mt-[6px] mr-[204px] text-right text-[36px] leading-[42px]">6</p>
        </main>
    );
}
